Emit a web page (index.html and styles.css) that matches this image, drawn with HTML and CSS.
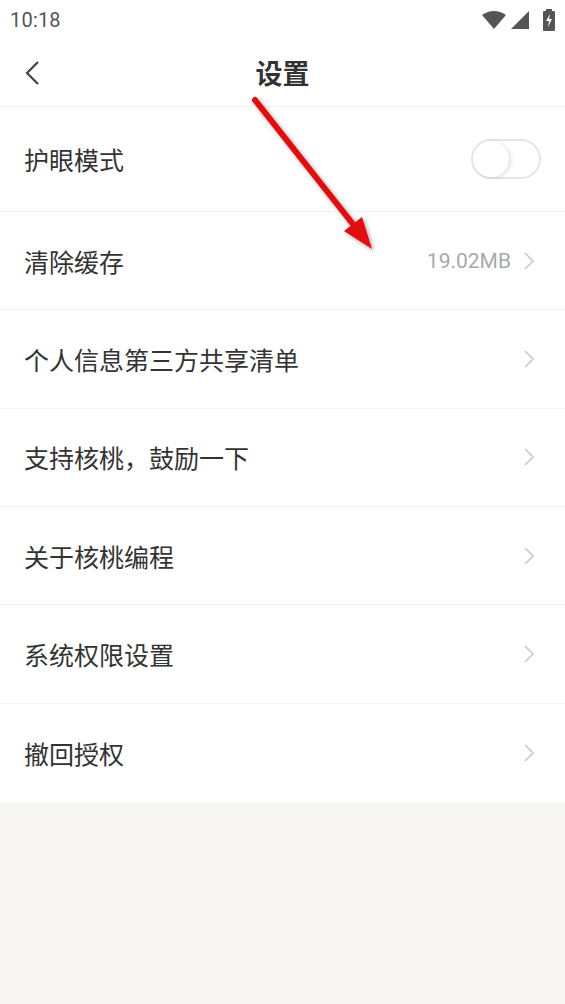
FILE: index.html
```html
<!DOCTYPE html>
<html lang="zh">
<head>
<meta charset="utf-8">
<title>设置</title>
<link rel="stylesheet" href="styles.css">
</head>
<body>
<div class="screen">
  <div class="statusbar">
    <span class="time">10:18</span>
    <div class="status-icons">
      <svg class="wifi" width="26" height="20" viewBox="0 0 26 20"><path d="M1 5 Q13 -3 25 5 L13 19 Z" fill="#555"/></svg>
      <svg class="signal" width="20" height="20" viewBox="0 0 20 20"><path d="M19 1 L19 19 L1 19 Z" fill="#555"/></svg>
      <svg class="battery" width="14" height="22" viewBox="0 0 14 22"><rect x="4" y="0" width="6" height="3" fill="#555"/><rect x="1" y="2" width="12" height="20" rx="1" fill="#555"/><path d="M8 5 L4 12 L7 12 L6 18 L10 10 L7 10 Z" fill="#fff"/></svg>
    </div>
  </div>
  <header class="navbar">
    <svg class="back" width="20" height="28" viewBox="0 0 20 28"><path d="M14 3 L3 14 L14 25" fill="none" stroke="#444" stroke-width="2.2"/></svg>
    <h1 class="title">设置</h1>
  </header>
  <ul class="list">
    <li class="row row-first">
      <span class="label">护眼模式</span>
      <span class="toggle"><span class="knob"></span></span>
    </li>
    <li class="row">
      <span class="label">清除缓存</span>
      <span class="right"><span class="value">19.02MB</span><svg class="chev" width="12" height="20" viewBox="0 0 12 20"><path d="M2 2 L10 10 L2 18" fill="none" stroke="#c8c8c8" stroke-width="1.6"/></svg></span>
    </li>
    <li class="row">
      <span class="label">个人信息第三方共享清单</span>
      <span class="right"><svg class="chev" width="12" height="20" viewBox="0 0 12 20"><path d="M2 2 L10 10 L2 18" fill="none" stroke="#c8c8c8" stroke-width="1.6"/></svg></span>
    </li>
    <li class="row">
      <span class="label">支持核桃，鼓励一下</span>
      <span class="right"><svg class="chev" width="12" height="20" viewBox="0 0 12 20"><path d="M2 2 L10 10 L2 18" fill="none" stroke="#c8c8c8" stroke-width="1.6"/></svg></span>
    </li>
    <li class="row">
      <span class="label">关于核桃编程</span>
      <span class="right"><svg class="chev" width="12" height="20" viewBox="0 0 12 20"><path d="M2 2 L10 10 L2 18" fill="none" stroke="#c8c8c8" stroke-width="1.6"/></svg></span>
    </li>
    <li class="row">
      <span class="label">系统权限设置</span>
      <span class="right"><svg class="chev" width="12" height="20" viewBox="0 0 12 20"><path d="M2 2 L10 10 L2 18" fill="none" stroke="#c8c8c8" stroke-width="1.6"/></svg></span>
    </li>
    <li class="row">
      <span class="label">撤回授权</span>
      <span class="right"><svg class="chev" width="12" height="20" viewBox="0 0 12 20"><path d="M2 2 L10 10 L2 18" fill="none" stroke="#c8c8c8" stroke-width="1.6"/></svg></span>
    </li>
  </ul>
  <svg class="annot-arrow" width="565" height="300" viewBox="0 0 565 300">
    <defs>
      <filter id="sh" x="-20%" y="-20%" width="140%" height="140%">
        <feDropShadow dx="2" dy="2" stdDeviation="2" flood-color="#000" flood-opacity="0.35"/>
      </filter>
    </defs>
    <g filter="url(#sh)">
      <line x1="255" y1="100" x2="356" y2="228" stroke="#e30b0b" stroke-width="6" stroke-linecap="round"/>
      <path d="M372 249 L344 231 L362 217 Z" fill="#e30b0b"/>
    </g>
  </svg>
</div>
</body>
</html>
```

FILE: styles.css
```css
* { box-sizing: border-box; margin: 0; padding: 0; }
html, body { width: 565px; height: 1004px; }
body {
  background: #f7f6f4;
  font-family: "Noto Sans CJK SC", "Noto Sans", Roboto, sans-serif;
  color: #333;
  overflow: hidden;
}
.screen { position: relative; width: 565px; height: 1004px; }
.statusbar {
  height: 40px;
  background: #fff;
  display: flex;
  align-items: center;
  justify-content: space-between;
  padding: 0 9px 0 10px;
}
.time {
  font-family: Roboto, "Noto Sans", sans-serif;
  font-size: 20px;
  color: #555;
  letter-spacing: 0.2px;
}
.status-icons { display: flex; align-items: center; gap: 3px; }
.status-icons .battery { margin-left: 9px; }
.navbar {
  height: 67px;
  background: #fff;
  display: flex;
  align-items: center;
  justify-content: center;
  position: relative;
  border-bottom: 1px solid #f3f3f3;
}
.back { position: absolute; left: 24px; top: 19px; }
.title {
  font-size: 27px;
  font-weight: 700;
  color: #333;
  margin-top: -2px;
}
.list { list-style: none; background: #fff; }
.row {
  height: 98.33px;
  display: flex;
  align-items: center;
  justify-content: space-between;
  padding: 0 30px 0 24px;
  border-bottom: 1px solid #f3f3f3;
}
.row-first { height: 105px; padding-right: 24px; }
.row:last-child { border-bottom: none; }
.label { font-size: 25px; color: #333; }
.right { display: flex; align-items: center; gap: 12px; }
.value {
  font-family: Roboto, "Noto Sans", sans-serif;
  font-size: 21px;
  color: #a9a9a9;
}
.chev { display: block; }
.toggle {
  width: 70px;
  height: 40px;
  border: 2px solid #e6e6e6;
  border-radius: 20px;
  background: #fff;
  position: relative;
}
.knob {
  position: absolute;
  left: 0;
  top: 0;
  width: 36px;
  height: 36px;
  border-radius: 50%;
  background: #fff;
  box-shadow: 2px 1px 4px rgba(0,0,0,0.12);
}
.annot-arrow { position: absolute; left: 0; top: 0; pointer-events: none; }
```
